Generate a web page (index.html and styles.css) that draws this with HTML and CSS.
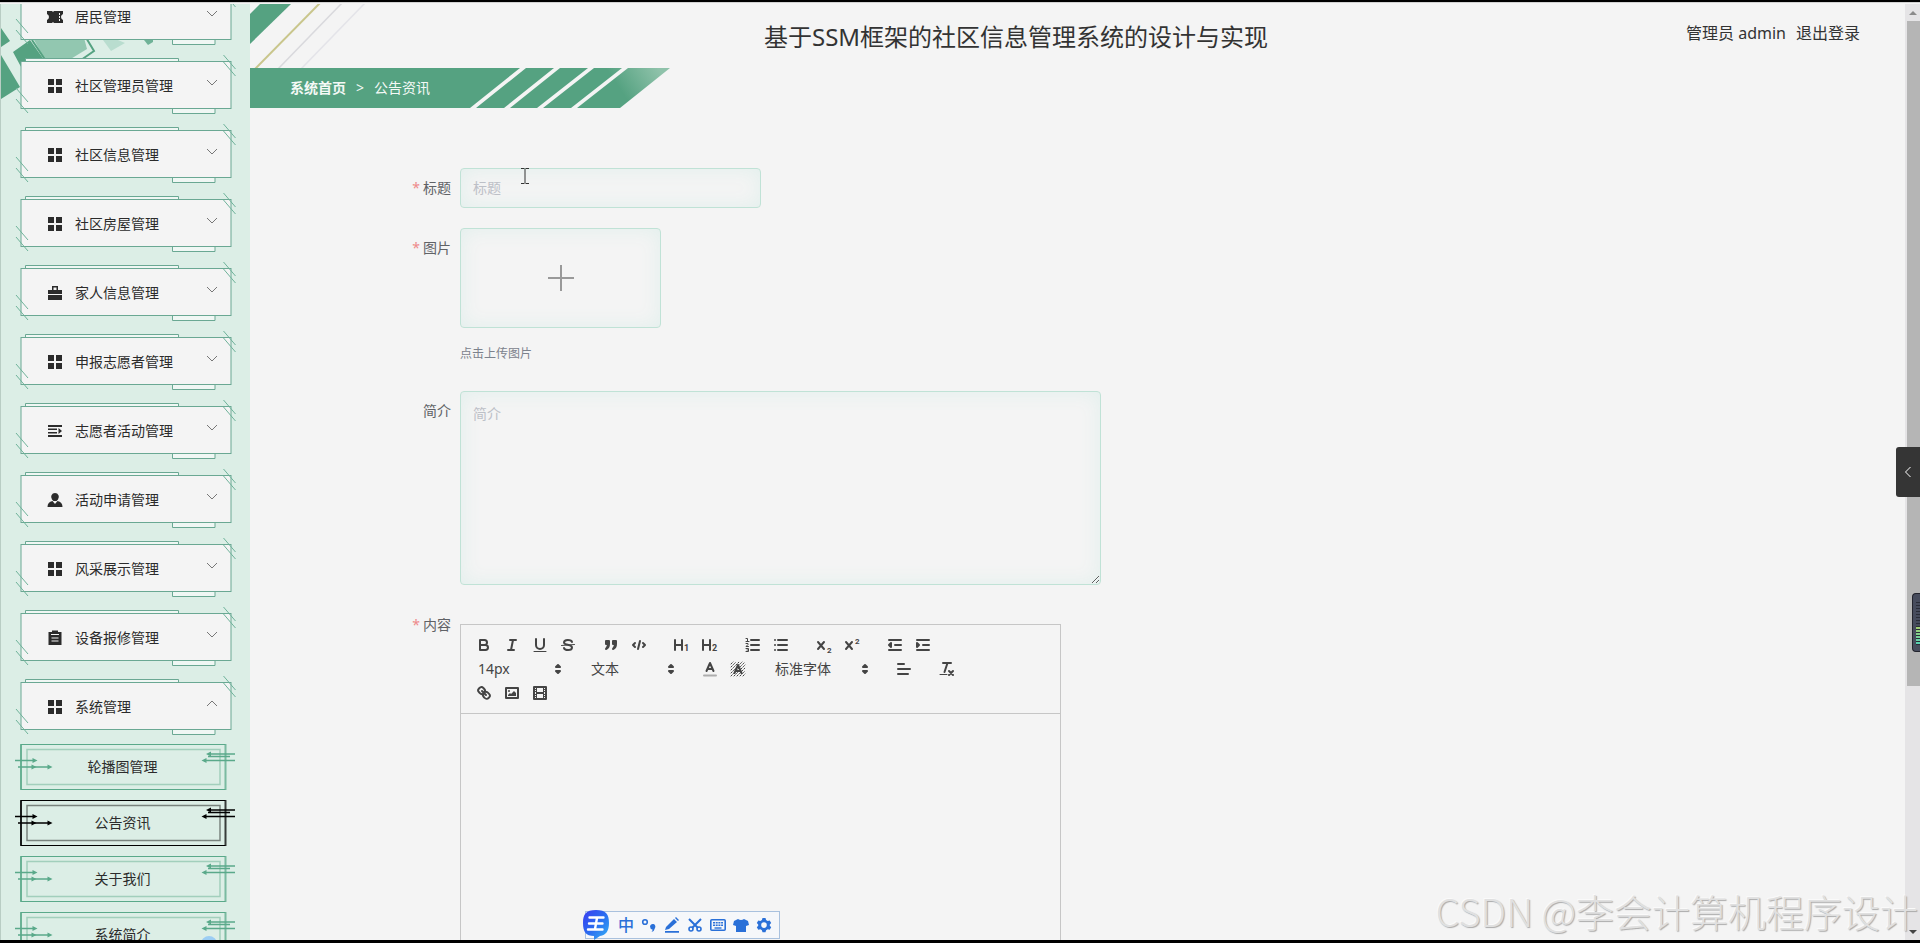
FILE: index.html
```html
<!DOCTYPE html>
<html lang="zh-CN">
<head>
<meta charset="utf-8">
<title>基于SSM框架的社区信息管理系统的设计与实现</title>
<link rel="stylesheet" href="styles.css">
</head>
<body>
<svg class="defs" aria-hidden="true">
  <symbol id="card" viewBox="0 0 222 69">
    <path d="M11.5 8V5.500H164.500V8M158.500 56V60.500H201V56" fill="#f0f7f4" stroke="#6aa893"/>
    <rect x="7" y="8.500" width="210" height="47" fill="#f4f4f4" stroke="#6aa893"/>
    <path d="M209.500 2l12 14M209.500 9l12 14M2 35l12 14M2 46l12 14" fill="none" stroke="#6fb39a"/>
  </symbol>
  <symbol id="frame" viewBox="0 0 222 56">
    <g fill="none" stroke="currentColor">
      <path d="M211.500 1.500H7V46.500H211.500"/>
      <path d="M211.500 1V47M7 1V47" stroke-width="2" opacity=".75"/>
      <rect x="13" y="6.500" width="193" height="35" opacity=".45" stroke-width="1.500"/>
      <path d="M1 17.500H20M4 24H36M194 11H221M194 13.500H216M190 17.500H221" stroke-width="1.500"/>
    </g>
    <path d="M18.500 15l5 2.500-5 2.500zM17.500 21.500l5 2.500-5 2.500zM33.500 21.500l5 2.500-5 2.500zM197 8.500l-5 2.500 5 2.500zM192.500 15l-5 2.500 5 2.500z" fill="currentColor"/>
  </symbol>
  <symbol id="grid" viewBox="0 0 16 16"><path d="M1 1h6v6H1zM9 1h6v6H9zM1 9h6v6H1zM9 9h6v6H9z" fill="currentColor"/></symbol>
  <symbol id="ticket" viewBox="0 0 16 16"><path d="M0 2h5l1 1 1-1h9v3q-2 1-2 3t2 3v3H7l-1-1-1 1H0v-3q2-1 2-3T0 5z" fill="currentColor"/><path d="M12.500 4v2M12.500 7v2M12.500 10v2" stroke="#f4f4f4"/></symbol>
  <symbol id="case" viewBox="0 0 16 16"><path d="M1 5h4V1h6v4h4v4H1zM6.500 2.500V5h3V2.500zM1 10h14v5H1z" fill="currentColor" fill-rule="evenodd"/></symbol>
  <symbol id="list" viewBox="0 0 16 16"><path d="M1 2h14v2H1zM1 5.500h9v1.500H1zM1 9h9v1.500H1zM1 12h14v2H1zM11.500 5l3.500 3-3.500 3z" fill="currentColor"/></symbol>
  <symbol id="person" viewBox="0 0 16 16"><path d="M8 1a4 4 0 0 1 3 6.500L9.500 9h-3L5 7.500A4 4 0 0 1 8 1zM.5 15q0-5 5-6L8 12l2.500-3q5 1 5 6z" fill="currentColor"/></symbol>
  <symbol id="clip" viewBox="0 0 16 16"><path d="M1.500 2H5V0.500h6V2h3.500v13h-13z" fill="currentColor"/><path d="M4 4.500h8M4.500 8h7M4.500 11h7" stroke="#f4f4f4"/></symbol>
  <symbol id="down" viewBox="0 0 12 8"><path d="M1 1l5 5 5-5" fill="none" stroke="#777"/></symbol>
  <symbol id="up" viewBox="0 0 12 8"><path d="M1 6l5-5 5 5" fill="none" stroke="#777"/></symbol>
  <symbol id="sort" viewBox="0 0 18 18"><path d="M7 11l2 2 2-2zM7 7l2-2 2 2z" fill="#444" stroke="#444" stroke-width="2" stroke-linejoin="round"/></symbol>
</svg>

<div class="app">
  <nav class="sidebar" aria-label="主菜单">
    <svg class="sidebar-art" viewBox="0 0 120 100" aria-hidden="true">
      <path d="M0 24l9 13-9 6zM12 48l17-12 17 24-20 14zM0 51l19 32L0 95z" fill="#55a281"/>
      <path d="M32 34l50-4 4 15-18 11H44z" fill="#92c7b0"/>
      <path d="M31 36l14 21M84 32l9 15-13 9" fill="none" stroke="#55a281" stroke-width="2"/>
      <path d="M102 36h15l7 3-14 8z" fill="#b9ddcf"/>
      <path d="M143 36h9v2l-5 3z" fill="#6fb297"/>
    </svg>
    <ul class="menu">
      <li><button class="item"><svg class="back"><use href="#card"/></svg><svg class="ico"><use href="#ticket"/></svg><span>居民管理</span><svg class="arrow"><use href="#down"/></svg></button></li>
      <li><button class="item"><svg class="back"><use href="#card"/></svg><svg class="ico"><use href="#grid"/></svg><span>社区管理员管理</span><svg class="arrow"><use href="#down"/></svg></button></li>
      <li><button class="item"><svg class="back"><use href="#card"/></svg><svg class="ico"><use href="#grid"/></svg><span>社区信息管理</span><svg class="arrow"><use href="#down"/></svg></button></li>
      <li><button class="item"><svg class="back"><use href="#card"/></svg><svg class="ico"><use href="#grid"/></svg><span>社区房屋管理</span><svg class="arrow"><use href="#down"/></svg></button></li>
      <li><button class="item"><svg class="back"><use href="#card"/></svg><svg class="ico"><use href="#case"/></svg><span>家人信息管理</span><svg class="arrow"><use href="#down"/></svg></button></li>
      <li><button class="item"><svg class="back"><use href="#card"/></svg><svg class="ico"><use href="#grid"/></svg><span>申报志愿者管理</span><svg class="arrow"><use href="#down"/></svg></button></li>
      <li><button class="item"><svg class="back"><use href="#card"/></svg><svg class="ico"><use href="#list"/></svg><span>志愿者活动管理</span><svg class="arrow"><use href="#down"/></svg></button></li>
      <li><button class="item"><svg class="back"><use href="#card"/></svg><svg class="ico"><use href="#person"/></svg><span>活动申请管理</span><svg class="arrow"><use href="#down"/></svg></button></li>
      <li><button class="item"><svg class="back"><use href="#card"/></svg><svg class="ico"><use href="#grid"/></svg><span>风采展示管理</span><svg class="arrow"><use href="#down"/></svg></button></li>
      <li><button class="item"><svg class="back"><use href="#card"/></svg><svg class="ico"><use href="#clip"/></svg><span>设备报修管理</span><svg class="arrow"><use href="#down"/></svg></button></li>
      <li><button class="item"><svg class="back"><use href="#card"/></svg><svg class="ico"><use href="#grid"/></svg><span>系统管理</span><svg class="arrow"><use href="#up"/></svg></button>
        <ul class="submenu">
          <li><a class="sub" href="#"><svg class="back"><use href="#frame"/></svg><span>轮播图管理</span></a></li>
          <li><a class="sub active" href="#"><svg class="back"><use href="#frame"/></svg><span>公告资讯</span></a></li>
          <li><a class="sub" href="#"><svg class="back"><use href="#frame"/></svg><span>关于我们</span></a></li>
          <li><a class="sub" href="#"><svg class="back"><use href="#frame"/></svg><span>系统简介</span></a></li>
        </ul>
      </li>
    </ul>
    <span class="blob"></span>
  </nav>

  <main class="main">
    <header class="header">
      <svg class="stripes" viewBox="0 0 120 64" aria-hidden="true">
        <path d="M0 10L10 0H41L0 40z" fill="#55a281"/>
        <g fill="none"><path d="M70 -1L5 65" stroke="#c9c68c" stroke-width="2"/><path d="M92 -1L28 65" stroke="#d9d9dd" stroke-width="1.500"/><path d="M115 -1L51 65" stroke="#e4e4e9" stroke-width="1.500"/></g>
      </svg>
      <h1>基于SSM框架的社区信息管理系统的设计与实现</h1>
      <div class="user"><span>管理员 admin</span><a href="#">退出登录</a></div>
    </header>
    <nav class="crumbs" aria-label="面包屑">
      <svg class="crumbs-bg" viewBox="0 0 420 40" aria-hidden="true">
        <defs><linearGradient id="fade" gradientUnits="userSpaceOnUse" x1="372" y1="24" x2="408" y2="0"><stop offset="0" stop-color="#55a281"/><stop offset="1" stop-color="#8fc2aa"/></linearGradient></defs>
        <path d="M0 0H420L370 40H0z" fill="url(#fade)"/>
        <path d="M270 0h6L226 40h-6zM304 0h6L260 40h-6zM338 0h6L293 40h-6zM372 0h6L327 40h-6z" fill="#f4f4f4"/>
      </svg>
      <a href="#"><b>系统首页</b></a><span>&gt;</span><span>公告资讯</span>
    </nav>

    <form class="form">
      <div class="row">
        <label for="title"><i>*</i>标题</label>
        <input class="field" id="title" type="text" placeholder="标题">
      </div>
      <div class="row">
        <label for="pic"><i>*</i>图片</label>
        <div class="upload">
          <button class="field drop" id="pic" type="button" aria-label="上传图片"><svg viewBox="0 0 26 26"><path d="M13 0v26M0 13h26" stroke="#999" stroke-width="2"/></svg></button>
          <p>点击上传图片</p>
        </div>
      </div>
      <div class="row">
        <label for="intro">简介</label>
        <textarea class="field" id="intro" placeholder="简介"></textarea>
      </div>
      <div class="row">
        <label for="editor"><i>*</i>内容</label>
        <div class="editor">
          <div class="toolbar">
            <div class="group">
              <button type="button" aria-label="粗体"><svg viewBox="0 0 18 18"><path d="M5 4H9.500a2.500 2.500 0 0 1 0 5H5zM5 9h5.500a2.500 2.500 0 0 1 0 5H5z"/></svg></button>
              <button type="button" aria-label="斜体"><svg viewBox="0 0 18 18"><path d="M7 4h6M5 14h6M8 14L10 4"/></svg></button>
              <button type="button" aria-label="下划线"><svg viewBox="0 0 18 18"><path d="M5 3V9a4 4 0 0 0 8 0V3"/><path class="thin" d="M3 15.500h12"/></svg></button>
              <button type="button" aria-label="删除线"><svg viewBox="0 0 18 18"><path d="M13 6C12.500 3.500 5 3 5 6.500 5 9.500 13 8 13 11.500 13 15 5.500 14.500 5 12"/><path class="thin" d="M2.500 9.500l13-1"/></svg></button>
            </div>
            <div class="group">
              <button type="button" aria-label="引用"><svg viewBox="0 0 18 18"><path class="quote" d="M4 5h3v3H4zM11 5h3v3h-3zM7 8c0 4-3 5-3 5 2-2 2-3 2-5zM14 8c0 4-3 5-3 5 2-2 2-3 2-5z"/></svg></button>
              <button type="button" aria-label="代码"><svg viewBox="0 0 18 18"><path d="M5 7L3 9l2 2M13 7l2 2-2 2M10 5L8 13"/></svg></button>
            </div>
            <div class="group">
              <button type="button" aria-label="标题一"><svg viewBox="0 0 18 18"><path d="M2 4v10M9 4v10M2 9h7"/><text x="11" y="15">1</text></svg></button>
              <button type="button" aria-label="标题二"><svg viewBox="0 0 18 18"><path d="M2 4v10M9 4v10M2 9h7"/><text x="11" y="15">2</text></svg></button>
            </div>
            <div class="group">
              <button type="button" aria-label="有序列表"><svg viewBox="0 0 18 18"><path d="M7 4h8M7 9h8M7 14h8"/><path class="thin" d="M2 2.500h1.500v3M2 5.500h3M2 7.500h2v1l-2 2h2.500M2 12.500h2.500v3H2M3 14h1.500"/></svg></button>
              <button type="button" aria-label="无序列表"><svg viewBox="0 0 18 18"><path d="M6 4h9M6 9h9M6 14h9M3 4h0M3 9h0M3 14h0"/></svg></button>
            </div>
            <div class="group">
              <button type="button" aria-label="下标"><svg viewBox="0 0 18 18"><path d="M3 6l6 7M9 6l-6 7"/><text class="small" x="12" y="17">2</text></svg></button>
              <button type="button" aria-label="上标"><svg viewBox="0 0 18 18"><path d="M3 6l6 7M9 6l-6 7"/><text class="small" x="12" y="8">2</text></svg></button>
            </div>
            <div class="group">
              <button type="button" aria-label="减少缩进"><svg viewBox="0 0 18 18"><path d="M3 14h12M3 4h12M9 9h6"/><path class="quote" d="M5 7v4L3 9z"/></svg></button>
              <button type="button" aria-label="增加缩进"><svg viewBox="0 0 18 18"><path d="M3 14h12M3 4h12M9 9h6"/><path class="quote" d="M3 7v4l2-2z"/></svg></button>
            </div>
            <div class="group picker"><select aria-label="字号"><option>14px</option></select><svg><use href="#sort"/></svg></div>
            <div class="group picker"><select aria-label="段落"><option>文本</option></select><svg><use href="#sort"/></svg></div>
            <div class="group">
              <button type="button" aria-label="文字颜色"><svg viewBox="0 0 18 18"><path d="M3 15.500h12" opacity=".4"/><path d="M5.500 11L9 3l3.500 8M6.500 9h5"/></svg></button>
              <button type="button" aria-label="背景颜色"><svg viewBox="0 0 18 18"><path class="thin" stroke-dasharray="1 1.500" d="M2 4l2-2M2 7l5-5M2 10l8-8M2 13L13 2M2 16L16 2M5 16L16 5M8 16l8-8M11 16l5-5M14 16l2-2"/><path d="M5.500 13L9 5l3.500 8M6.500 11h5"/></svg></button>
            </div>
            <div class="group picker wide"><select aria-label="字体"><option>标准字体</option></select><svg><use href="#sort"/></svg></div>
            <div class="group">
              <button type="button" aria-label="对齐"><svg viewBox="0 0 18 18"><path d="M3 9h12M3 14h10M3 4h6"/></svg></button>
            </div>
            <div class="group">
              <button type="button" aria-label="清除格式"><svg viewBox="0 0 18 18"><path d="M5 3h8M6.500 12L9.500 3M11 11l4 4M15 11l-4 4"/><path class="thin" d="M2 14.500h7"/></svg></button>
            </div>
            <div class="group">
              <button type="button" aria-label="链接"><svg viewBox="0 0 18 18"><path d="M7 7l4 4M8.900 4.600a3.500 3.500 0 0 1 .4 4.700A3.500 3.500 0 0 1 4.600 8.900C3.200 7.500 2 6.400 4.200 4.200S7.500 3.200 8.900 4.600zM13.400 9.100a3.500 3.500 0 0 0-4.700-.4 3.500 3.500 0 0 0 .4 4.700c1.400 1.400 2.500 2.500 4.700.4s1-3.300-.4-4.700z"/></svg></button>
              <button type="button" aria-label="图片"><svg viewBox="0 0 18 18"><path d="M3 4h12v10H3z"/><circle class="solid" cx="6" cy="7" r="1"/><path class="solid" d="M5 12v-1l2-2 1 1 3-3 2 2v3z"/></svg></button>
              <button type="button" aria-label="视频"><svg viewBox="0 0 18 18"><path d="M3 3h12v12H3z"/><path class="solid" d="M5 3h1v12H5zM12 3h1v12h-1zM5 8h8v2H5zM3 5h3v1H3zM3 7h3v1H3zM3 10h3v1H3zM3 12h3v1H3zM12 5h3v1h-3zM12 7h3v1h-3zM12 10h3v1h-3zM12 12h3v1h-3z"/></svg></button>
            </div>
          </div>
          <div class="paper" id="editor" contenteditable="true" role="textbox" aria-label="内容"></div>
        </div>
      </div>
    </form>
  </main>

  <div class="scrollbar" aria-hidden="true">
    <svg viewBox="0 0 15 17"><path d="M4 11l4-4 4 4z" fill="#8b8b8b"/></svg>
    <div class="thumb"></div>
    <svg viewBox="0 0 15 17"><path d="M4 7h8l-4 4z" fill="#444"/></svg>
  </div>
</div>

<svg class="cursor" viewBox="0 0 8 16" aria-hidden="true"><path d="M0 .5h3.500M4.500 .5H8M4 1v14M0 15.500h3.500M4.500 15.500H8" stroke="#333" fill="none"/></svg>

<button class="drawer" aria-label="展开"><svg viewBox="0 0 8 12"><path d="M6.500 1L1.500 6l5 5" fill="none" stroke="#fff"/></svg></button>
<div class="meter"><span></span></div>

<div class="ime">
  <svg class="ime-logo" viewBox="0 0 28 30"><defs><linearGradient id="lg" x1="0" y1="0" x2="1" y2="1"><stop offset="0" stop-color="#3a3cf0"/><stop offset=".5" stop-color="#2b6df0"/><stop offset="1" stop-color="#35b4f5"/></linearGradient></defs><path d="M14 0c10 0 13 4 13 13 0 8-3 12-9 13l-6 4v-4C4 26 1 22 1 13 1 4 4 0 14 0z" fill="url(#lg)"/><path d="M7.500 7.500h14M7 13.500h13.500M6 19.500h14.500M15 8l-2 11" stroke="#fff" stroke-width="2.400" fill="none" stroke-linecap="round"/></svg>
  <span class="zh">中</span>
  <svg viewBox="0 0 16 16"><circle cx="4" cy="5" r="2.300" fill="none" stroke="#2a70d8" stroke-width="1.600"/><path d="M9 9.500a2.700 2.700 0 1 1 5 1.500q-.5 3-3.500 4 1.200-1.500 1-2.500Q9 12 9 9.500z" fill="#2a70d8"/></svg>
  <svg viewBox="0 0 16 16"><path d="M2 10l8-8 3 3-8 7-4 1zM11 1l1-1 3 3-1 1zM1 14h14v1.800H1z" fill="#2a70d8"/></svg>
  <svg viewBox="0 0 16 16"><path d="M2 2l9 9M14 2l-9 9" stroke="#2a70d8" stroke-width="2"/><circle cx="4" cy="12" r="2" fill="none" stroke="#2a70d8" stroke-width="1.600"/><circle cx="12" cy="12" r="2" fill="none" stroke="#2a70d8" stroke-width="1.600"/></svg>
  <svg viewBox="0 0 16 16"><rect x=".8" y="2.800" width="14.400" height="10.400" rx="1" fill="none" stroke="#2a70d8" stroke-width="1.600"/><path d="M3 5.800h10M3 8.300h10" stroke="#2a70d8" stroke-width="1.600" stroke-dasharray="2 .7"/><path d="M4.500 11h7" stroke="#2a70d8" stroke-width="1.400"/></svg>
  <svg viewBox="0 0 16 16"><path d="M5 2q3 2 6 0l4 2 1 4-3 1v6H3V9L0 8l1-4z" fill="#2a70d8"/></svg>
  <svg viewBox="0 0 16 16"><path d="M6.500 1h3l.6 2 1.600.9 2-.5 1.500 2.600L13.800 7.500v1.200l1.400 1.500-1.500 2.600-2-.5-1.600.9-.6 2h-3l-.6-2-1.600-.9-2 .5L.8 10.200l1.400-1.500V7.500L.8 6l1.500-2.600 2 .5L5.900 3zM8 5.300a2.800 2.800 0 1 0 0 5.600 2.800 2.800 0 0 0 0-5.600z" fill="#2a70d8" fill-rule="evenodd"/></svg>
</div>

<div class="watermark">CSDN @李会计算机程序设计</div>
</body>
</html>
```
FILE: styles.css
```css
* { box-sizing: border-box; }

body {
  margin: 0;
  height: 100vh;
  overflow: hidden;
  border-top: 2px solid #000;
  border-bottom: 3px solid #000;
  background: #f4f4f4;
  color: #333;
  font: 14px/20px "Noto Sans", "Noto Sans CJK SC", sans-serif;
}

button, input, select, textarea { font: inherit; color: inherit; }
button { padding: 0; border: 0; background: none; }
ul { margin: 0; padding: 0; list-style: none; }
a { color: inherit; text-decoration: none; }
.defs { position: absolute; width: 0; height: 0; }

.app {
  display: flex;
  height: 100%;
  padding-top: 1px;
  border-top: 1px solid #d2d2d2;
}

/* Sidebar */
.sidebar {
  position: relative;
  flex: none;
  width: 250px;
  padding-left: 13px;
  overflow: hidden;
  border-left: 1px solid #b9cdc4;
  background: #dceee6;
  color: #2b2b2b;
}
.sidebar-art { position: absolute; left: 0; top: 0; width: 120px; height: 100px; overflow: visible; }
.blob {
  position: absolute;
  left: 200px;
  bottom: -12px;
  width: 16px;
  height: 16px;
  border: 4px solid #9ccdf3;
  border-radius: 50%;
  background: #1e90ff;
}
.menu { position: relative; margin-top: -20px; }
.item, .sub {
  position: relative;
  display: flex;
  align-items: center;
  width: 222px;
}
.item { height: 69px; padding: 0 18px 4px 33px; text-align: left; }
.item span { position: relative; flex: 1; }
.back { position: absolute; left: 0; top: 0; width: 100%; height: 100%; }
.ico { position: relative; width: 16px; height: 16px; margin-right: 12px; }
.arrow { position: relative; width: 12px; height: 8px; margin-bottom: 6px; }
.sub { justify-content: center; height: 56px; padding: 0 5px 8px 0; color: #5aa98a; }
.sub span { position: relative; color: #2b2b2b; }
.sub.active { color: #000; }

/* Header */
.main { flex: 1; min-width: 0; overflow: hidden; }
.header {
  position: relative;
  display: flex;
  align-items: center;
  height: 64px;
  padding: 0 45px 0 96px;
}
.stripes { position: absolute; left: 0; top: 0; width: 120px; height: 64px; }
.header h1 {
  flex: 1;
  margin: 0;
  padding-top: 1px;
  font-size: 24px;
  font-weight: 400;
  line-height: 32px;
  text-align: center;
}
.user { display: flex; gap: 10px; padding-bottom: 6px; font-size: 16px; }

.crumbs {
  position: relative;
  display: flex;
  align-items: center;
  gap: 10px;
  width: 420px;
  height: 40px;
  padding-left: 40px;
  color: #f4f9f6;
}
.crumbs > * { position: relative; }
.crumbs .crumbs-bg { position: absolute; left: 0; top: 0; width: 100%; height: 100%; }

/* Form */
.form { padding: 60px 40px 0 130px; }
.row { display: flex; align-items: flex-start; margin-bottom: 20px; }
.row > label {
  flex: none;
  width: 80px;
  padding-right: 9px;
  color: #606266;
  line-height: 40px;
  text-align: right;
}
.row > label i { margin-right: 3px; color: #ee8a8a; font-style: normal; }
.field {
  height: 40px;
  border: 1px solid #c0e2d6;
  border-radius: 4px;
  background: transparent;
  box-shadow: inset 0 0 20px #e1efec;
  outline: 0;
}
input.field { width: 301px; padding: 0 12px 2px; }
.field::placeholder { color: #bdc0c7; opacity: 1; }
.drop { display: flex; align-items: center; justify-content: center; width: 201px; height: 100px; }
.drop svg { width: 26px; height: 26px; }
.upload p { margin: 16px 0 7px; color: #7c828c; font-size: 12px; }
textarea.field { width: 641px; height: 194px; padding: 12px; }

.editor { width: 601px; margin-top: 19px; border: 1px solid #c6c6c6; }
.toolbar {
  display: flex;
  flex-wrap: wrap;
  padding: 8px 8px 8px 9px;
  border-bottom: 1px solid #c6c6c6;
}
.group { display: flex; height: 24px; margin-right: 15px; }
.group button { width: 28px; height: 24px; padding: 3px 5px; }
.group button svg {
  display: block;
  width: 18px;
  height: 18px;
  fill: none;
  stroke: #444;
  stroke-width: 2;
  stroke-linecap: round;
  stroke-linejoin: round;
}
.group .thin { stroke-width: 1; }
.group .solid { fill: #444; stroke: none; }
.group .quote { fill: #444; stroke-width: 2; }
.group text { fill: #444; stroke: none; font: bold 9px Roboto, sans-serif; }
.group .small { font-size: 8px; }
.picker { position: relative; width: 98px; }
.picker.wide { width: 108px; }
.picker select {
  appearance: none;
  width: 100%;
  padding: 0 8px;
  border: 0;
  background: none;
  color: #444;
}
.picker svg { position: absolute; right: 1px; top: 3px; width: 18px; height: 18px; pointer-events: none; }
.paper { min-height: 400px; outline: 0; }

/* Page scrollbar */
.scrollbar {
  display: flex;
  flex-direction: column;
  flex: none;
  width: 15px;
  background: #e5e4e6;
}
.scrollbar svg { flex: none; width: 15px; height: 17px; }
.thumb { width: 13px; height: 71%; margin: 0 0 auto 2px; background: #b5b5b5; }

/* Floating overlays */
.cursor { position: absolute; left: 521px; top: 168px; width: 8px; height: 16px; }
.drawer {
  position: absolute;
  right: 0;
  top: 447px;
  display: flex;
  align-items: center;
  justify-content: center;
  width: 24px;
  height: 50px;
  border-radius: 3px 0 0 3px;
  background: #353535;
}
.drawer svg { width: 8px; height: 12px; }
.meter {
  position: absolute;
  right: 0;
  top: 593px;
  width: 8px;
  height: 59px;
  padding: 6px 0 6px 3px;
  border: 1px solid #23242e;
  border-right: 0;
  border-radius: 4px 0 0 4px;
  background: #474c5d;
}
.meter span {
  display: block;
  height: 100%;
  background:
    repeating-linear-gradient(transparent 0 2px, #2a2d38 2px 3px),
    linear-gradient(#474c5d 60%, #a4d070 60%, #4fd0b8);
}
.ime {
  position: absolute;
  left: 585px;
  bottom: 4px;
  display: flex;
  align-items: center;
  gap: 7px;
  width: 195px;
  height: 28px;
  padding-left: 32px;
  border: 1px solid #a9c1de;
  background: #f5f7fa;
}
.ime svg { width: 16px; height: 16px; }
.ime .ime-logo { position: absolute; left: -4px; top: -2px; width: 28px; height: 30px; }
.zh { width: 16px; color: #2a70d8; font-size: 16px; font-weight: 500; }
.watermark {
  position: absolute;
  right: 2px;
  bottom: 4px;
  color: #e0e0e0;
  font-family: "Noto Sans CJK SC", sans-serif;
  font-size: 38px;
  font-weight: 300;
  line-height: 56px;
  text-shadow: 1px 1px 1px #aaa, -1px -1px 0 #fafafa;
  white-space: nowrap;
}
```
